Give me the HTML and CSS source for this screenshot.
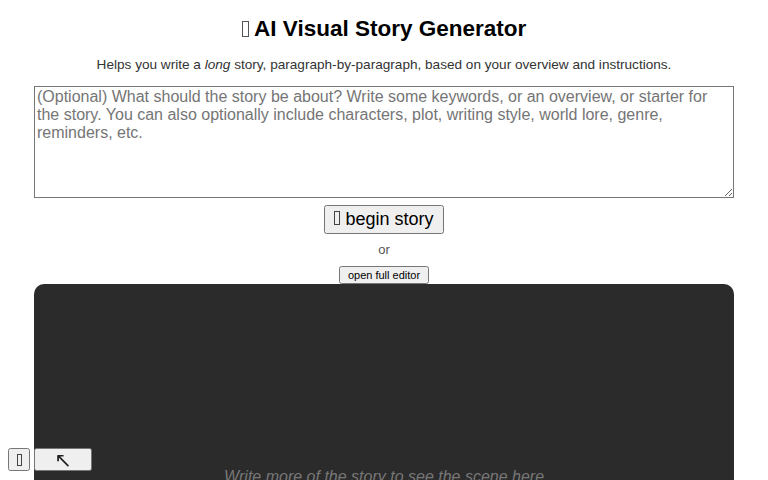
FILE: index.html
```html
<!DOCTYPE html>
<html>
<head>
<meta charset="utf-8">
<link rel="stylesheet" href="styles.css">
</head>
<body>
<div class="app">
  <h1 class="title"><span class="tofu tofu-lg"></span> AI Visual Story Generator</h1>
  <p class="subtitle">Helps you write a <i>long</i> story, paragraph-by-paragraph, based on your overview and instructions.</p>
  <textarea class="prompt" placeholder="(Optional) What should the story be about? Write some keywords, or an overview, or starter for the story. You can also optionally include characters, plot, writing style, world lore, genre, reminders, etc."></textarea>
  <div class="actions">
    <button class="begin"><span class="tofu tofu-md"></span> begin story</button>
    <div class="or">or</div>
    <button class="editor">open full editor</button>
  </div>
  <div class="scene">
    <div class="scene-empty">Write more of the story to see the scene here</div>
  </div>
</div>
<div class="corner">
  <button class="corner-btn small"><span class="tofu tofu-sm"></span></button>
  <button class="corner-btn wide">↖</button>
</div>
</body>
</html>
```
FILE: styles.css
```css
body {
  margin: 8px;
  font-family: "Liberation Sans", Arial, sans-serif;
  color: #000;
  background: #fff;
}
.app {
  max-width: 700px;
  margin: 0 auto;
}
.tofu {
  display: inline-block;
  box-sizing: border-box;
  border: 1px solid #555;
  vertical-align: baseline;
}
.tofu-lg { width: 7px; height: 16px; margin-bottom: -1px; }
.tofu-md { width: 6px; height: 14px; border-color: #444; }
.tofu-sm { width: 5px; height: 12px; border-color: #444; vertical-align: middle; }
.title {
  font-size: 22.5px;
  font-weight: bold;
  text-align: center;
  margin: 8px 0 0;
  line-height: 26px;
}
.subtitle {
  font-size: 13.6px;
  line-height: 16px;
  text-align: center;
  margin: 15px 0 13px;
  color: #333;
}
.prompt {
  display: block;
  box-sizing: border-box;
  width: 700px;
  height: 112px;
  font-family: "Liberation Sans", Arial, sans-serif;
  font-size: 16px;
  padding: 1px 2px 2px;
  border: 1px solid #767676;
  margin: 0;
  resize: vertical;
}
.prompt::placeholder {
  color: #757575;
}
.actions {
  display: flex;
  flex-direction: column;
  align-items: center;
  margin-top: 7px;
}
.begin {
  font-family: "Liberation Sans", Arial, sans-serif;
  font-size: 18px;
  padding: 2px 8px;
  height: 29px;
}
.or {
  font-size: 13px;
  color: #555;
  margin-top: 8px;
  line-height: 16px;
}
.editor {
  font-family: "Liberation Sans", Arial, sans-serif;
  font-size: 11px;
  margin-top: 8px;
  height: 18px;
  padding: 1px 7px;
}
.scene {
  height: 386px;
  background: #2b2b2b;
  border-radius: 10px;
  display: flex;
  align-items: center;
  justify-content: center;
}
.scene-empty {
  font-style: italic;
  color: #777;
  font-size: 16px;
}
.corner {
  position: fixed;
  left: 8px;
  bottom: 9px;
  display: flex;
  gap: 4px;
}
.corner-btn {
  height: 23px;
  padding: 0;
  font-family: "DejaVu Sans", sans-serif;
}
.corner-btn.small { width: 22px; }
.corner-btn.wide { width: 58px; font-size: 21px; line-height: 21px; color: #222; }
```
